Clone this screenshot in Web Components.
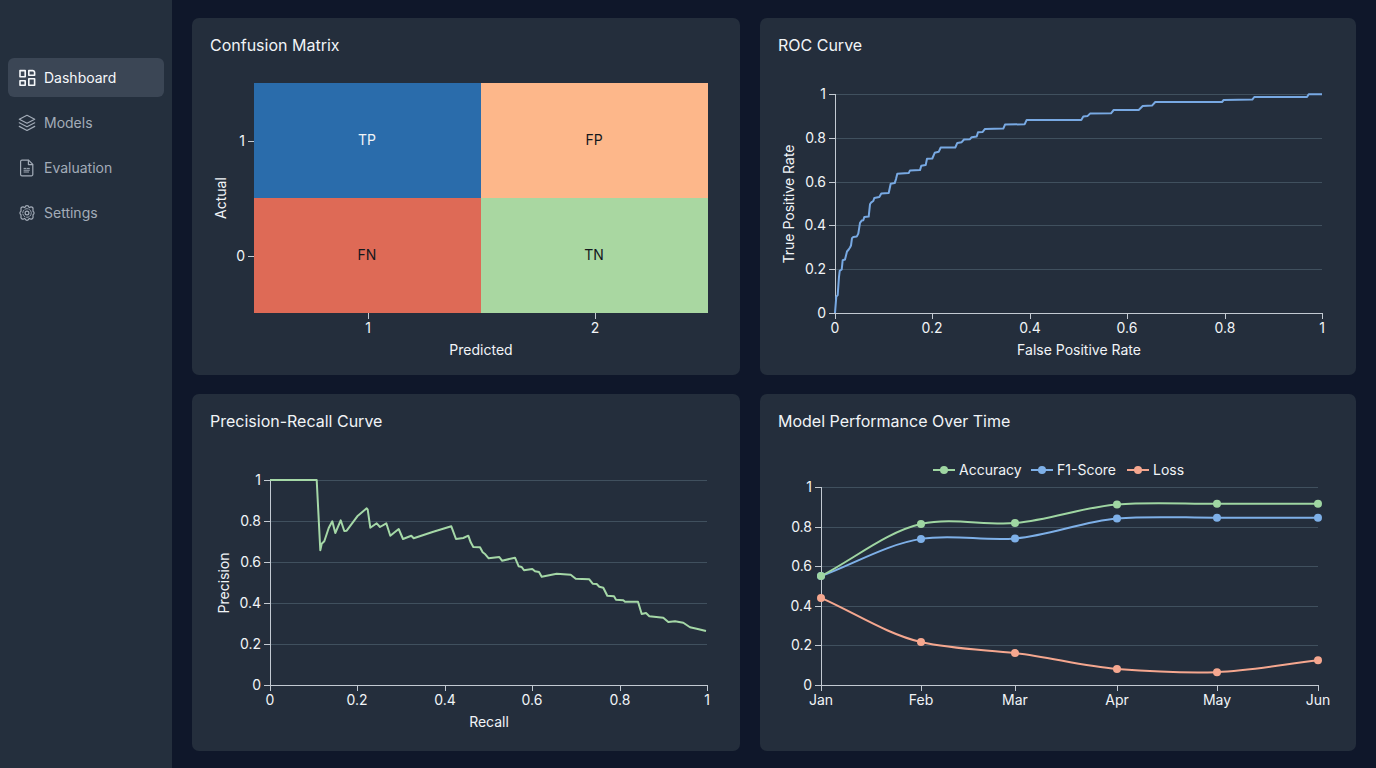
<!DOCTYPE html>
<html lang="en">
<head>
<meta charset="utf-8">
<meta name="viewport" content="width=device-width, initial-scale=1">
<title>Model Evaluation Dashboard</title>
<style>
  html, body { margin: 0; height: 100%; }
  body { background: #0f172a; color: #f1f4f7; font-family: Inter, "Liberation Sans", sans-serif; font-size: 14px; }
</style>
</head>
<body>
<app-shell>
  <side-nav slot="nav">
    <nav-item href="#dashboard" icon="grid" current>Dashboard</nav-item>
    <nav-item href="#models" icon="layers">Models</nav-item>
    <nav-item href="#evaluation" icon="report">Evaluation</nav-item>
    <nav-item href="#settings" icon="gear">Settings</nav-item>
  </side-nav>
  <chart-card><span slot="title">Confusion Matrix</span><confusion-chart></confusion-chart></chart-card>
  <chart-card><span slot="title">ROC Curve</span><roc-chart></roc-chart></chart-card>
  <chart-card><span slot="title">Precision-Recall Curve</span><pr-chart></pr-chart></chart-card>
  <chart-card><span slot="title">Model Performance Over Time</span><history-chart></history-chart></chart-card>
</app-shell>

<script>
class AppShell extends HTMLElement {
  constructor() {
    super();
    this.attachShadow({ mode: 'open' }).innerHTML = `
      <style>
        :host { display: grid; grid-template-columns: 172px minmax(0, 1fr); min-height: 100vh; }
        main {
          display: grid; gap: 19px 20px; padding: 18px 20px 17px;
          grid-template-columns: minmax(0, 548fr) minmax(0, 596fr);
          grid-template-rows: repeat(2, minmax(300px, 1fr));
        }
      </style>
      <slot name="nav"></slot>
      <main><slot></slot></main>`;
  }
}

class SideNav extends HTMLElement {
  constructor() {
    super();
    this.attachShadow({ mode: 'open' }).innerHTML = `
      <style>
        :host { display: block; background: #242f3d; }
        nav { display: flex; flex-direction: column; gap: 6px; padding: 58px 8px 16px; }
      </style>
      <nav aria-label="Main"><slot></slot></nav>`;
  }
}

const ICONS = {
  grid: `<g stroke-width="1.6"><path d="M2 1.600h5.200v6.200H2z"/><path d="M10.800 1.600h3.800a2 2 0 0 1 2 2v2.600h-5.800z"/><path d="M10.800 9.800h5.800v6.400h-5.800z"/><path d="M2 11.800h5.200v4.400H2z"/></g>`,
  layers: `<path d="M9 1.300 16.700 5.200 9 9.200 1.300 5.200z"/><path d="M1.300 8.800 9 12.800l7.700-4"/><path d="M1.300 12.400 9 16.500l7.700-4.100"/>`,
  report: `<path d="M4 1.200h6.600l4.200 4.200v10a1.400 1.400 0 0 1-1.400 1.400H4a1.400 1.400 0 0 1-1.400-1.400V2.600A1.400 1.400 0 0 1 4 1.200z"/><path d="M10.400 1.400v4.200h4.200"/><path stroke-width="1" d="M6 9.400h1.800M9 9.400h2.400M6 11.200h5.400M6 13h4.600"/>`,
  gear: `<path d="M7 3.300a2.050 2.050 0 0 1 4 0l.5.3a2.050 2.050 0 0 1 3.500 2l0 1.600a2.050 2.050 0 0 1 0 3.600l0 1.600a2.050 2.050 0 0 1-3.500 2l-.5.300a2.050 2.050 0 0 1-4 0l-.5-.300a2.050 2.050 0 0 1-3.500-2l0-1.600a2.050 2.050 0 0 1 0-3.600l0-1.600a2.050 2.050 0 0 1 3.500-2z"/><circle cx="9" cy="9" r="4.300" stroke-width=".9" stroke-dasharray="3 1.500"/><circle cx="9" cy="9" r="1.900"/>`
};

class NavItem extends HTMLElement {
  constructor() {
    super();
    this.attachShadow({ mode: 'open' });
  }
  connectedCallback() {
    const current = this.hasAttribute('current');
    this.shadowRoot.innerHTML = `
      <style>
        :host { display: block; color: #a3acb8; }
        :host([current]) { color: #f6f8fa; }
        a { display: flex; align-items: center; gap: 8px; height: 39px; padding: 0 10px;
            border-radius: 6px; color: inherit; text-decoration: none; line-height: 20px; }
        :host([current]) a { background: #3b4655; }
        svg { flex: none; width: 18px; height: 18px; fill: none; stroke: currentColor; stroke-width: 1.2;
              stroke-linejoin: round; stroke-linecap: round; }
      </style>
      <a href="${this.getAttribute('href')}"${current ? ' aria-current="page"' : ''}>
        <svg viewBox="0 0 18 18" aria-hidden="true">${ICONS[this.getAttribute('icon')]}</svg>
        <slot></slot>
      </a>`;
  }
}

class ChartCard extends HTMLElement {
  constructor() {
    super();
    this.attachShadow({ mode: 'open' }).innerHTML = `
      <style>
        :host { display: flex; flex-direction: column; min-width: 0; border-radius: 7px; background: #242e3c; }
        h2 { margin: 0; padding: 15px 18px 0; font-size: 16px; font-weight: 400; line-height: 24px; }
        .body { flex: 1; display: grid; min-height: 0; }
      </style>
      <h2><slot name="title"></slot></h2>
      <div class="body"><slot></slot></div>`;
  }
}

/* Base for all charts: redraws an SVG at the element's own size. */
class BaseChart extends HTMLElement {
  constructor() {
    super();
    this.attachShadow({ mode: 'open' }).innerHTML = `
      <style>
        :host { display: block; position: relative; min-width: 0; min-height: 0; }
        svg { position: absolute; inset: 0; width: 100%; height: 100%; }
        text { fill: #f1f4f7; font-size: 14px; text-anchor: middle; }
        text.end { text-anchor: end; }
        text.start { text-anchor: start; }
        text.dark { fill: #14181d; }
        .grid, .axis { shape-rendering: crispEdges; fill: none; stroke-width: 1; }
        .grid { stroke: #40505e; }
        .axis { stroke: #c3cad2; }
        .line { fill: none; stroke-width: 2; stroke-linejoin: round; }
      </style>
      <svg role="img"></svg>`;
    this.svg = this.shadowRoot.querySelector('svg');
  }
  connectedCallback() {
    this.svg.setAttribute('aria-label', this.label);
    this.redraw();
    new ResizeObserver(() => this.redraw()).observe(this);
  }
  redraw() {
    const { top, right, bottom, left } = this.margin;
    const w = this.clientWidth, h = this.clientHeight;
    if (!w || !h) return;
    this.box = { x0: left, x1: w - right, y0: top, y1: h - bottom };
    this.svg.innerHTML = this.draw(this.box);
  }
  px(t) { return Math.round(this.box.x0 + t * (this.box.x1 - this.box.x0)); }
  py(t) { return Math.round(this.box.y1 - t * (this.box.y1 - this.box.y0)); }
  frame(xTicks) {
    const { x0, x1, y0, y1 } = this.box;
    let out = '';
    for (const v of [0, 0.2, 0.4, 0.6, 0.8, 1]) {
      const y = this.py(v);
      if (v) out += `<path class="grid" d="M${x0} ${y}H${x1}"/>`;
      out += `<path class="axis" d="M${x0 - 6} ${y}h6"/><text class="end" x="${x0 - 9}" y="${y + 5}">${v}</text>`;
    }
    for (const [t, name] of xTicks) {
      const x = this.px(t);
      out += `<path class="axis" d="M${x} ${y1}v6"/><text x="${x}" y="${y1 + 20}">${name}</text>`;
    }
    return out + `<path class="axis" d="M${x0} ${y0}V${y1}H${x1}"/>`;
  }
  names(xName, yName, yLabelX) {
    const { x0, x1, y0, y1 } = this.box;
    const my = Math.round((y0 + y1) / 2);
    return `<text x="${Math.round((x0 + x1) / 2)}" y="${y1 + 42}">${xName}</text>
      <text transform="translate(${yLabelX} ${my}) rotate(-90)">${yName}</text>`;
  }
  polyline(points, maxX, maxY, color) {
    const { x0, x1, y0, y1 } = this.box;
    const d = points.trim().split(/\s+/).map(p => {
      const [x, y] = p.split(',').map(Number);
      return (x0 + x / maxX * (x1 - x0)).toFixed(1) + ' ' + (y1 - y / maxY * (y1 - y0)).toFixed(1);
    });
    return `<path class="line" stroke="${color}" d="M${d.join('L')}"/>`;
  }
}

const UNIT_TICKS = [0, 0.2, 0.4, 0.6, 0.8, 1].map(v => [v, v]);

class ConfusionChart extends BaseChart {
  label = 'Confusion matrix';
  margin = { top: 26, right: 32, bottom: 62, left: 62 };
  draw({ x0, x1, y0, y1 }) {
    const mx = this.px(0.5), my = this.py(0.5);
    const cell = (ax, ay, bx, by, color, name, cls) => `
      <rect x="${ax}" y="${ay}" width="${bx - ax}" height="${by - ay}" fill="${color}"/>
      <text class="${cls}" x="${Math.floor((ax + bx) / 2)}" y="${Math.floor((ay + by) / 2) + 5}">${name}</text>`;
    let out = cell(x0, y0, mx, my, '#2a6cab', 'TP', '')
      + cell(mx, y0, x1, my, '#fdb78a', 'FP', 'dark')
      + cell(x0, my, mx, y1, '#de6a56', 'FN', 'dark')
      + cell(mx, my, x1, y1, '#a9d7a1', 'TN', 'dark');
    for (const [t, name] of [[0.25, 0], [0.75, 1]]) {
      const y = this.py(t);
      out += `<path class="axis" d="M${x0 - 6} ${y}h6"/><text class="end" x="${x0 - 9}" y="${y + 5}">${name}</text>`;
    }
    for (const [t, name] of [[0.25, 1], [0.75, 2]]) {
      const x = this.px(t);
      out += `<path class="axis" d="M${x} ${y1}v6"/><text x="${x}" y="${y1 + 20}">${name}</text>`;
    }
    return out + this.names('Predicted', 'Actual', 34);
  }
}

class RocChart extends BaseChart {
  label = 'ROC curve';
  margin = { top: 37, right: 34, bottom: 62, left: 75 };
  /* false positives, true positives: counts out of 1461 negatives and 659 positives */
  points = `0,0 4,49 8,54 12,109 14,127 20,131 23,159 30,161 36,185 41,191 45,197 48,203 51,225 55,229 65,230
    70,239 75,271 80,278 85,279 88,289 101,290 105,327 109,333 115,337 118,346 133,349 139,360 161,361 167,389
    179,391 183,403 187,419 221,421 225,429 255,430 259,443 272,445 276,464 292,465 299,482 311,485 317,498
    361,498 367,512 380,514 387,522 405,523 410,529 425,531 429,544 443,545 450,554 505,555 510,567 569,568
    575,581 739,581 745,591 758,593 765,600 828,601 836,611 911,611 923,623 951,624 961,635 1161,635 1166,641
    1252,642 1258,650 1416,650 1421,658 1461,658`;
  draw() {
    return this.frame(UNIT_TICKS) + this.polyline(this.points, 1461, 659, '#78a9e3')
      + this.names('False Positive Rate', 'True Positive Rate', 34);
  }
}

class PrChart extends BaseChart {
  label = 'Precision-recall curve';
  margin = { top: 47, right: 33, bottom: 66, left: 78 };
  /* recall out of 1311, precision out of 615 */
  points = `0,615 140,615 151,404 155,424 163,431 176,471 187,491 196,456 212,494 223,462 230,463 262,506 290,530
    293,526 301,472 320,485 330,474 349,485 361,448 386,468 399,438 424,448 431,440 490,460 544,476 558,438
    580,441 595,448 602,428 610,414 630,413 638,398 646,392 656,380 688,384 696,373 735,382 746,356 755,354
    762,344 787,348 795,341 807,339 815,325 860,334 902,331 917,319 958,317 968,304 980,303 988,295 1000,292
    1012,268 1032,266 1038,256 1060,254 1065,250 1104,250 1115,213 1128,216 1138,206 1180,202 1195,189 1215,191
    1240,187 1260,173 1280,169 1308,162`;
  draw() {
    return this.frame(UNIT_TICKS) + this.polyline(this.points, 1311, 615, '#a5d8a7')
      + this.names('Recall', 'Precision', 37);
  }
}

class HistoryChart extends BaseChart {
  label = 'Model performance over time';
  margin = { top: 54, right: 38, bottom: 66, left: 61 };
  months = [[0, 'Jan'], [0.201, 'Feb'], [0.391, 'Mar'], [0.596, 'Apr'], [0.797, 'May'], [1, 'Jun']];
  series = [
    { name: 'Loss', color: '#f5a78f', legend: 194, values: [0.44, 0.217, 0.161, 0.081, 0.065, 0.125] },
    { name: 'F1-Score', color: '#7eb0e8', legend: 98, values: [0.55, 0.738, 0.74, 0.841, 0.845, 0.845] },
    { name: 'Accuracy', color: '#9fd6a2', legend: 0, values: [0.55, 0.813, 0.818, 0.912, 0.915, 0.915] }
  ];
  curve(p) {
    let d = `M${p[0]}`;
    for (let i = 0; i < p.length - 1; i++) {
      const a = p[i], b = p[i + 1], prev = p[i - 1], next = p[i + 2];
      const dx = (b[0] - a[0]) / 3;
      const sa = prev ? (b[1] - prev[1]) / (b[0] - prev[0]) * 0.8 : (b[1] - a[1]) / (b[0] - a[0]);
      const sb = next ? (next[1] - a[1]) / (next[0] - a[0]) * 0.8 : (b[1] - a[1]) / (b[0] - a[0]);
      d += `C${a[0] + dx} ${a[1] + sa * dx} ${b[0] - dx} ${b[1] - sb * dx} ${b}`;
    }
    return d;
  }
  draw({ x0, x1, y0, y1 }) {
    let out = this.frame(this.months);
    const start = Math.round((x0 + x1) / 2) - 137;
    for (const s of this.series) {
      const p = s.values.map((v, i) => [this.px(this.months[i][0]), y1 - v * (y1 - y0)]);
      out += `<path class="line" stroke="${s.color}" d="${this.curve(p)}"/>`;
      out += p.map(([x, y]) => `<circle cx="${x}" cy="${y}" r="4" fill="${s.color}"/>`).join('');
      const lx = start + s.legend, ly = y0 - 17;
      out += `<path class="line" stroke="${s.color}" d="M${lx} ${ly}h22"/>
        <circle cx="${lx + 11}" cy="${ly}" r="4" fill="${s.color}"/>
        <text class="start" x="${lx + 26}" y="${ly + 5}">${s.name}</text>`;
    }
    return out;
  }
}

customElements.define('app-shell', AppShell);
customElements.define('side-nav', SideNav);
customElements.define('nav-item', NavItem);
customElements.define('chart-card', ChartCard);
customElements.define('confusion-chart', ConfusionChart);
customElements.define('roc-chart', RocChart);
customElements.define('pr-chart', PrChart);
customElements.define('history-chart', HistoryChart);
</script>
</body>
</html>
